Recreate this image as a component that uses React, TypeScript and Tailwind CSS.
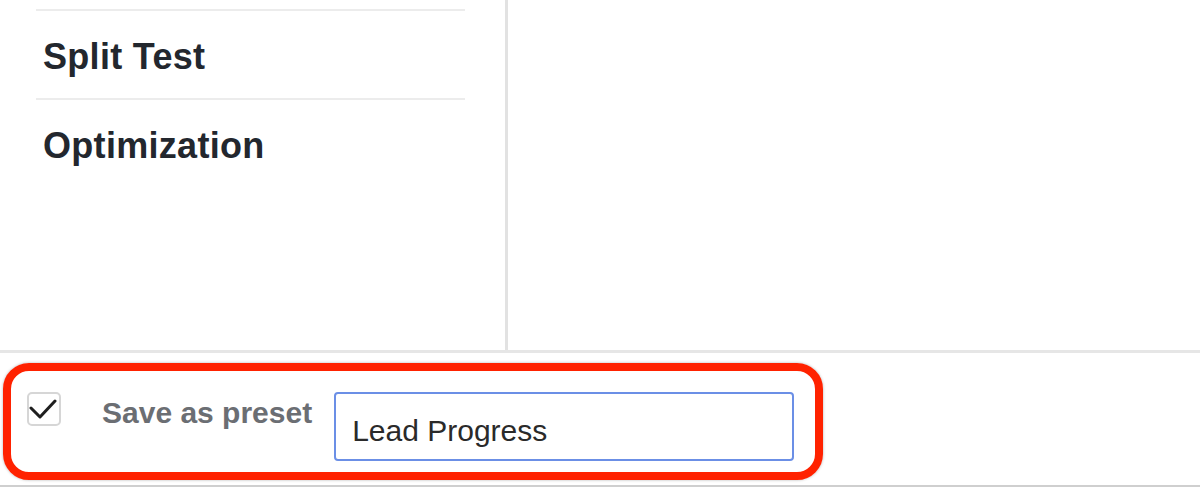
const sections = ["Split Test", "Optimization"];

const App = () => {
  return (
    <div className="w-[1200px] h-[487px] bg-white flex flex-col overflow-hidden font-['Liberation_Sans',Arial,sans-serif]">
      <div className="flex h-[353px] border-b-[3px] border-[#e6e6e6]">
        <div className="w-[508px] border-r-[3px] border-[#e2e2e2] pl-[36px] pr-[40px] pt-[9px]">
          {sections.map((s) => (
            <div key={s} className="border-t-2 border-[#ececec]">
              <h2 className="pl-[7px] pt-[26px] h-[87px] text-[36px] leading-[40px] tracking-[0.3px] font-bold text-[#23272e]">
                {s}
              </h2>
            </div>
          ))}
        </div>
        <div className="flex-1" />
      </div>
      <div className="flex-1 border-b-2 border-[#cfcfcf] pt-[10px] pl-[3px]">
        <div className="w-[820px] h-[117px] border-[8px] border-[#ff2200] rounded-[26px] shadow-[0_0_3px_rgba(0,0,0,0.3)] flex items-start pl-[16px] pt-[21px]">
          <label className="w-[34px] h-[34px] shrink-0 border-2 border-[#d6d6d6] rounded-[5px] bg-white flex items-center justify-center">
            <svg width="30" height="30" viewBox="0 0 30 30" fill="none">
              <path
                d="M2 14 L11 23 L26 7"
                stroke="#1f1f1f"
                strokeWidth="3"
                strokeLinecap="round"
                strokeLinejoin="round"
              />
            </svg>
          </label>
          <span className="ml-[41px] mt-[3px] text-[30px] leading-[36px] font-bold text-[#6b6e73] whitespace-nowrap">
            Save as preset
          </span>
          <div className="ml-[22px] w-[460px] h-[69px] border-2 border-[#6b8fe6] rounded-[4px] flex items-center pl-[16px]">
            <span className="text-[30px] leading-[36px] text-[#2a2a2a] mt-[8px]">Lead Progress</span>
          </div>
        </div>
      </div>
    </div>
  );
};

export default App;
